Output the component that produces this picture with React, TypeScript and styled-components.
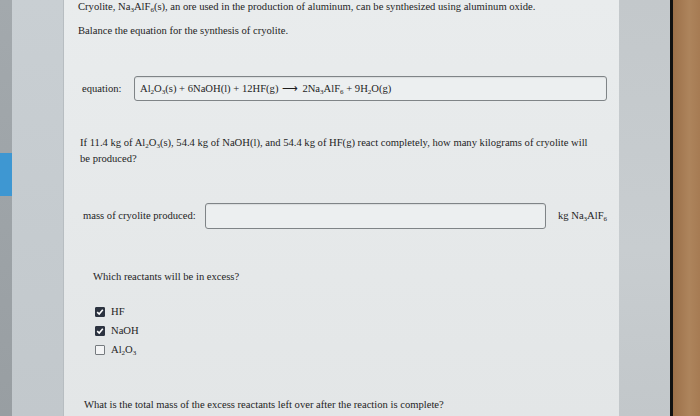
import styled, { createGlobalStyle } from "styled-components";

const Global = createGlobalStyle`
  html, body {
    margin: 0;
    padding: 0;
    background: #a77c55;
  }
  body {
    font-family: "Liberation Serif", "Times New Roman", serif;
  }
`

const Screen = styled.div`
  width: 700px;
  height: 416px;
  overflow: hidden;
  display: flex;
`
const LeftRail = styled.div`
  width: 12px;
  background: linear-gradient(180deg, #a3a9ad 0%, #989ea2 100%);
  display: flex;
  flex-direction: column;
`
const RailTab = styled.div`
  margin-top: 153px;
  height: 43px;
  background: #3e97d2;
`
const Sidebar = styled.div`
  width: 51px;
  background: linear-gradient(180deg, #c9cfd3 0%, #c2c8cc 100%);
  border-right: 1px solid #b7bdc1;
`
const Content = styled.main`
  flex: 1;
  background: linear-gradient(180deg, #e9eced 0%, #e3e6e7 100%);
  color: #1e1e1e;
  font-size: 10.6px;
  line-height: 16px;
  padding: 0 26px 0 14px;
`
const RightGutter = styled.div`
  width: 51px;
  background: linear-gradient(180deg, #c3c8cb 0%, #c8cdd0 60%, #c2c7ca 100%);
`
const Bezel = styled.div`
  width: 3px;
  background: #111;
`
const Wood = styled.div`
  width: 27px;
  background: linear-gradient(90deg, #9c7049 0%, #ad845c 60%, #a67b53 100%);
`
const Para = styled.p<{ $top: number; $indent?: number }>`
  margin: ${(p) => p.$top}px 0 0 ${(p) => p.$indent ?? 0}px;
  padding: 0;
  white-space: nowrap;
`
const Wrapped = styled(Para)`
  white-space: normal;
`
const Row = styled.div<{ $top: number; $indent: number }>`
  display: flex;
  align-items: center;
  margin: ${(p) => p.$top}px -40px 0 ${(p) => p.$indent}px;
`
const Label = styled.span<{ $w: number; $left?: number }>`
  width: ${(p) => p.$w}px;
  margin-left: ${(p) => p.$left ?? 0}px;
  flex-shrink: 0;
  white-space: nowrap;
`
const Field = styled.div<{ $w: number; $h: number }>`
  width: ${(p) => p.$w}px;
  height: ${(p) => p.$h}px;
  flex-shrink: 0;
  box-sizing: border-box;
  border: 1px solid #7f8487;
  border-radius: 3px;
  background: #eceff0;
  box-shadow: inset 0 1px 1px rgba(0, 0, 0, 0.08);
  display: flex;
  align-items: center;
  padding-left: 5px;
  white-space: nowrap;
`
const Sub = styled.sub`
  font-size: 7px;
  line-height: 1;
  vertical-align: -2px;
`
const Arrow = styled.span`
  display: inline-block;
  margin: 0 4px;
`
const Checks = styled.div`
  display: flex;
  flex-direction: column;
  gap: 3px;
  margin: 19px 0 0 17px;
`
const CheckRow = styled.label`
  display: flex;
  align-items: center;
  gap: 6px;
  height: 16px;
`
const Box = styled.span<{ $on: boolean }>`
  width: 10px;
  height: 10px;
  box-sizing: border-box;
  border-radius: 1px;
  display: flex;
  align-items: center;
  justify-content: center;
  background: ${(p) => (p.$on ? "#2c3340" : "#f3f4f5")};
  border: 1px solid ${(p) => (p.$on ? "#2c3340" : "#767b7f")};
`

function Check({ on, children }: { on: boolean; children: React.ReactNode }) {
  return (
    <CheckRow>
      <Box $on={on}>
        {on && (
          <svg width="8" height="8" viewBox="0 0 8 8">
            <path d="M1.2 4.2 L3.2 6 L6.8 1.8" stroke="#fff" strokeWidth="1.6" fill="none" />
          </svg>
        )}
      </Box>
      <span>{children}</span>
    </CheckRow>
  );
}

export default function App() {
  return (
    <>
      <Global />
      <Screen>
        <LeftRail>
          <RailTab />
        </LeftRail>
        <Sidebar />
        <Content>
          <Para $top={-1}>
            Cryolite, Na<Sub>3</Sub>AlF<Sub>6</Sub>(s), an ore used in the production of aluminum, can be
            synthesized using aluminum oxide.
          </Para>
          <Para $top={8}>Balance the equation for the synthesis of cryolite.</Para>

          <Row $top={37} $indent={4}>
            <Label $w={52}>equation:</Label>
            <Field $w={473} $h={25}>
              <span>
                Al<Sub>2</Sub>O<Sub>3</Sub>(s) + 6NaOH(l) + 12HF(g)
                <Arrow>⟶</Arrow>
                2Na<Sub>3</Sub>AlF<Sub>6</Sub> + 9H<Sub>2</Sub>O(g)
              </span>
            </Field>
          </Row>

          <Wrapped $top={34} $indent={2}>
            If 11.4 kg of Al<Sub>2</Sub>O<Sub>3</Sub>(s), 54.4 kg of NaOH(l), and 54.4 kg of HF(g) react
            completely, how many kilograms of cryolite will be produced?
          </Wrapped>

          <Row $top={36} $indent={5}>
            <Label $w={122}>mass of cryolite produced:</Label>
            <Field $w={341} $h={26} />
            <Label $w={60} $left={12}>
              kg Na<Sub>3</Sub>AlF<Sub>6</Sub>
            </Label>
          </Row>

          <Para $top={40} $indent={15}>Which reactants will be in excess?</Para>

          <Checks>
            <Check on>HF</Check>
            <Check on>NaOH</Check>
            <Check on={false}>
              Al<Sub>2</Sub>O<Sub>3</Sub>
            </Check>
          </Checks>

          <Para $top={39} $indent={6}>
            What is the total mass of the excess reactants left over after the reaction is complete?
          </Para>
        </Content>
        <RightGutter />
        <Bezel />
        <Wood />
      </Screen>
    </>
  );
}
